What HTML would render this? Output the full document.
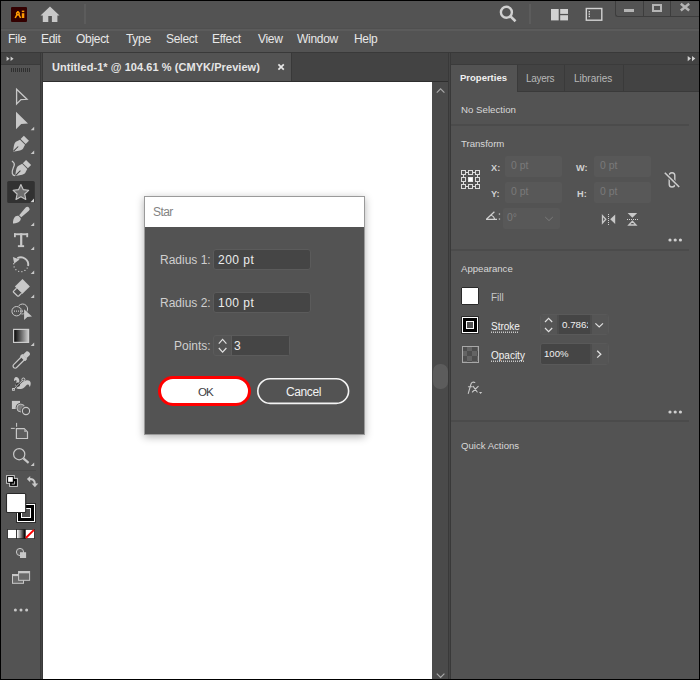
<!DOCTYPE html>
<html><head><meta charset="utf-8">
<style>
*{margin:0;padding:0;box-sizing:border-box}
html,body{width:700px;height:680px;overflow:hidden;background:#000}
body{position:relative;font-family:"Liberation Sans",sans-serif;color:#e8e8e8}
.a{position:absolute}
.t{position:absolute;white-space:nowrap;line-height:1}
svg{position:absolute;overflow:visible}
</style></head><body>
<!-- main window area -->
<div class="a" style="left:1px;top:1px;width:698px;height:678px;background:#535353"></div>
<!-- title bar subtle line -->
<div class="a" style="left:1px;top:28px;width:698px;height:1px;background:#4f4f4f"></div><div class="a" style="left:1px;top:29px;width:698px;height:2px;background:#5b5b5b"></div>
<!-- dark line under menu -->
<div class="a" style="left:1px;top:52px;width:698px;height:1px;background:#393939"></div>

<!-- ===== TITLE BAR ===== -->
<div class="a" style="left:11px;top:7px;width:16px;height:15px;background:#330000;border-radius:1px"></div>
<svg style="left:0;top:0" width="40" height="30"><g fill="none" stroke="#ff9a00" stroke-width="1.6"><path d="M15.2 18 L17 14.5 M20.6 18 L18.8 14.5"/><circle cx="17.9" cy="13.6" r="1.3"/><path d="M17.9 11 V12.2"/></g><rect x="21.8" y="10.6" width="2.5" height="1.5" fill="#ff9a00"/><rect x="21.8" y="13.2" width="2.5" height="4.8" fill="#ff9a00"/></svg>
<svg style="left:0;top:0" width="90" height="30"><path d="M50 6.4 L59.5 15.6 H57.4 V22.1 H51.9 V16.1 H48.3 V22.1 H42.8 V15.6 H40.5 Z" fill="#c8c8c8"/></svg>
<div class="a" style="left:84px;top:4px;width:2px;height:20px;background:#5c5c5c"></div>
<svg style="left:0;top:0" width="620" height="30"><circle cx="506.4" cy="12.2" r="5.5" fill="none" stroke="#d0d0d0" stroke-width="2.4"/><path d="M510.5 16.4 L515.5 21.3" stroke="#d0d0d0" stroke-width="2.6"/></svg>
<div class="a" style="left:529px;top:4px;width:2px;height:20px;background:#5c5c5c"></div>
<svg style="left:0;top:0" width="620" height="30"><g fill="#d2d2d2"><rect x="551" y="9" width="7.7" height="11.4"/><rect x="560.2" y="9" width="7.8" height="4.9"/><rect x="560.2" y="15.2" width="7.8" height="5.2"/></g>
<rect x="586.3" y="8.5" width="15.5" height="11.7" fill="none" stroke="#d2d2d2" stroke-width="1.4"/><g fill="#d2d2d2"><rect x="588.6" y="11" width="1.4" height="1.4"/><rect x="588.6" y="13.4" width="1.4" height="1.4"/><rect x="588.6" y="15.8" width="1.4" height="1.4"/></g></svg>
<div class="a" style="left:615px;top:1px;width:84px;height:16px;border:1px solid #3d3d3d;border-top:none;border-right:none;border-bottom-left-radius:3px;background:#535353"></div>
<div class="a" style="left:643px;top:1px;width:1px;height:15px;background:#3d3d3d"></div>
<div class="a" style="left:670px;top:1px;width:1px;height:15px;background:#3d3d3d"></div>
<div class="a" style="left:624px;top:9px;width:10px;height:3px;background:#b4b4b4"></div>
<div class="a" style="left:652px;top:4px;width:10px;height:8px;border:2px solid #b4b4b4"></div>
<svg style="left:0;top:0" width="700" height="30"><path d="M680.8 3.8 L689.2 10.4 M689.2 3.8 L680.8 10.4" stroke="#b4b4b4" stroke-width="2.5"/></svg>

<!-- ===== MENU ===== -->
<div class="t" style="left:8px;top:33px;font-size:12px;letter-spacing:-0.3px">File</div>
<div class="t" style="left:41px;top:33px;font-size:12px;letter-spacing:-0.3px">Edit</div>
<div class="t" style="left:76px;top:33px;font-size:12px;letter-spacing:-0.3px">Object</div>
<div class="t" style="left:126px;top:33px;font-size:12px;letter-spacing:-0.3px">Type</div>
<div class="t" style="left:166px;top:33px;font-size:12px;letter-spacing:-0.3px">Select</div>
<div class="t" style="left:212px;top:33px;font-size:12px;letter-spacing:-0.3px">Effect</div>
<div class="t" style="left:258px;top:33px;font-size:12px;letter-spacing:-0.3px">View</div>
<div class="t" style="left:297px;top:33px;font-size:12px;letter-spacing:-0.3px">Window</div>
<div class="t" style="left:354px;top:33px;font-size:12px;letter-spacing:-0.3px">Help</div>

<!-- ===== TOOLBAR ===== -->
<div class="a" style="left:1px;top:53px;width:39px;height:11px;background:#434343"></div>
<div class="a" style="left:1px;top:64px;width:39px;height:1px;background:#3b3b3b"></div>
<div class="a" style="left:40px;top:53px;width:1px;height:626px;background:#393939"></div>
<div class="a" style="left:41px;top:53px;width:1px;height:626px;background:#454545"></div>
<div class="a" style="left:42px;top:53px;width:1px;height:626px;background:#393939"></div>


<!-- toolbar icons -->
<svg style="left:0;top:0" width="43" height="680">
<defs><linearGradient id="g1" x1="0" x2="1"><stop offset="0" stop-color="#000"/><stop offset="1" stop-color="#cfcfcf"/></linearGradient>
<linearGradient id="g2" x1="0" x2="1"><stop offset="0" stop-color="#fff"/><stop offset="1" stop-color="#000"/></linearGradient></defs>
<g fill="#cfcfcf">
<path d="M6.6 56.6 L9.6 58.8 L6.6 61 Z M10.6 56.6 L13.6 58.8 L10.6 61 Z"/>
</g>
<g fill="#2f2f2f"><rect x="11" y="68" width="1" height="4"/><rect x="13" y="68" width="1" height="4"/><rect x="15" y="68" width="1" height="4"/><rect x="17" y="68" width="1" height="4"/><rect x="19" y="68" width="1" height="4"/><rect x="21" y="68" width="1" height="4"/><rect x="23" y="68" width="1" height="4"/><rect x="25" y="68" width="1" height="4"/><rect x="27" y="68" width="1" height="4"/><rect x="29" y="68" width="1" height="4"/></g>
<!-- selection -->
<path d="M16.6 89.3 L27 99.3 L21 99.6 L16.6 103.9 Z" fill="none" stroke="#c8c8c8" stroke-width="1.3" stroke-linejoin="miter"/>
<!-- direct selection -->
<path d="M16 111.8 L28 123.6 L21.2 124 L16 129.3 Z" fill="#c8c8c8"/>
<!-- corner triangles -->
<g fill="#c8c8c8">
<path d="M34.2 126.7 V130.2 H30.7 Z"/>
<path d="M34.2 150.6 V154.1 H30.7 Z"/>
<path d="M34.2 222.4 V225.9 H30.7 Z"/>
<path d="M34.2 246.5 V250 H30.7 Z"/>
<path d="M34.2 270.4 V273.9 H30.7 Z"/>
<path d="M34.2 294.5 V298 H30.7 Z"/>
<path d="M34.2 342.4 V345.9 H30.7 Z"/>
<path d="M34.2 462.4 V465.9 H30.7 Z"/>
</g>
<!-- pen -->
<g transform="translate(13.1 151.6) rotate(45)" fill="#c8c8c8">
<path d="M0 0 C-2.2 -3 -5.2 -6 -5 -9 L-3.6 -13.3 H3.6 L5 -9 C5.2 -6 2.2 -3 0 0 Z"/>
<rect x="-3.6" y="-18.8" width="7.2" height="4.6"/>
<path d="M0 -0.6 V-7.2" stroke="#3e3e3e" stroke-width="1"/>
</g>
<!-- curvature pen -->
<g transform="translate(15.3 175.8) rotate(45)" fill="#c8c8c8">
<path d="M0 0 C-2.2 -3 -5.2 -6 -5 -9 L-3.6 -13.3 H3.6 L5 -9 C5.2 -6 2.2 -3 0 0 Z"/>
<rect x="-3.6" y="-18.8" width="7.2" height="4.6"/>
<path d="M0 -0.6 V-7.2" stroke="#3e3e3e" stroke-width="1"/>
</g>
<path d="M11.9 161 C13.5 162 15 163 14.2 165.5 C13.4 168 11.5 171 12.3 173.5 C12.8 175 14 175.6 15 175.6" fill="none" stroke="#c8c8c8" stroke-width="1.2"/>
<!-- star tool box -->
<rect x="7.2" y="181" width="27.6" height="22" rx="1.6" fill="#323232"/>
<path d="M34 198.6 V202.2 H30.4 Z" fill="#d0d0d0"/>
<path d="M20.9 184.6 L23.2 189.6 L28.7 190.3 L24.7 194 L25.8 199.4 L20.9 196.7 L16 199.4 L17.1 194 L13.1 190.3 L18.6 189.6 Z" fill="#6e6e6e" stroke="#c4c4c4" stroke-width="1.1" stroke-linejoin="round"/>
<!-- brush -->
<g transform="translate(13 223.4) rotate(45)" fill="#c8c8c8">
<path d="M0 0 C-1.8 -1.6 -3.6 -4.2 -3.2 -6.8 C-3 -8 -2.2 -9 -1.5 -9.2 H1.5 C2.2 -9 3 -8 3.2 -6.8 C3.6 -4.2 1.8 -1.6 0 0 Z"/>
<path d="M-1.5 -10.2 L-2.3 -20.2 A2.3 2.3 0 0 1 2.3 -20.2 L1.5 -10.2 Z"/>
</g>
<!-- T -->
<g fill="#c8c8c8"><rect x="14" y="233.3" width="14.1" height="1.9"/><rect x="14" y="233.3" width="1.8" height="3.9"/><rect x="26.3" y="233.3" width="1.8" height="3.9"/><rect x="20.1" y="233.3" width="2.2" height="13.6"/><rect x="17.9" y="245.2" width="6.2" height="1.9"/></g>
<!-- rotate -->
<path d="M17.3 258.3 A7.3 7.3 0 0 1 28.1 266" fill="none" stroke="#c8c8c8" stroke-width="1.9"/>
<path d="M12.9 256.9 L19.6 259.6 L14.2 263.4 Z" fill="#c8c8c8"/>
<g fill="#d0d0d0"><circle cx="27.14" cy="268.10" r="0.65"/><circle cx="24.93" cy="270.47" r="0.65"/><circle cx="21.90" cy="271.63" r="0.65"/><circle cx="18.68" cy="271.35" r="0.65"/><circle cx="15.90" cy="269.68" r="0.65"/><circle cx="14.13" cy="266.96" r="0.65"/><circle cx="13.74" cy="263.75" r="0.65"/></g>
<!-- eraser -->
<path d="M22.5 279 L29.9 286.6 L22.2 294.1 L14.9 286.6 Z" fill="#c8c8c8"/>
<path d="M16.6 288.2 L13.6 291.1 Q13 291.7 13.6 292.3 L17.5 296 Q18.1 296.5 18.7 296 L21.6 293.1" fill="#505050" stroke="#c8c8c8" stroke-width="1.2" stroke-linejoin="round"/>
<!-- shape builder -->
<circle cx="22.6" cy="309" r="5" fill="none" stroke="#c8c8c8" stroke-width="1"/>
<circle cx="16.6" cy="311.2" r="5.6" fill="#535353"/>
<circle cx="16.6" cy="311.2" r="4.7" fill="none" stroke="#c8c8c8" stroke-width="1"/>
<path d="M20.4 307.6 A4.6 4.6 0 0 1 20.4 314.8" fill="none" stroke="#8a8a8a" stroke-width="0.8"/>
<g fill="#e0e0e0"><rect x="14" y="310.6" width="1" height="1"/><rect x="16" y="310.6" width="1" height="1"/><rect x="18" y="310.6" width="1" height="1"/><rect x="20" y="310.6" width="1" height="1"/><rect x="22" y="310.6" width="1" height="1"/></g>
<path d="M24.1 309.2 L32 316.6 L27.3 316.9 L24.1 320.1 Z" fill="#c8c8c8" stroke="#535353" stroke-width="0.8" paint-order="stroke"/>
<!-- gradient -->
<rect x="13.6" y="329.4" width="15" height="13" fill="url(#g1)" stroke="#cdcdcd" stroke-width="1.2"/>
<!-- eyedropper -->
<g transform="translate(13.8 367.4) rotate(45)" fill="#c8c8c8">
<path d="M-2.1 -12.6 V-1.9 A2.1 2.1 0 0 0 2.1 -1.9 V-12.6" fill="#4a4a4a" stroke="#c8c8c8" stroke-width="1.2"/>
<rect x="-3.6" y="-15.6" width="7.2" height="3.4" rx="0.6"/>
<path d="M-2.5 -15.4 V-19.8 C-2.5 -21 -1.4 -21.6 0 -21.6 C1.4 -21.6 2.5 -21 2.5 -19.8 V-15.4 Z"/>
</g>
<!-- puppet warp -->
<path d="M14.2 381 C13.6 378.8 14.8 377 16.4 377.1 C18.4 377.2 19.4 379.2 19.4 381.6 L19.6 383 C21.8 382.8 23.6 381.4 25.6 380.6 C27.6 379.8 30 380.2 30.6 382.6 C30.9 384 30.4 386 29.8 387.2 C29.4 385.8 29 384.6 28 384.4 C26.8 384.2 25.8 386 24.2 387.4 C22.4 389 19.8 389.4 17.6 388.8 C15.6 388.2 15 386.6 15.6 384.8 C16.1 383.2 16.9 381.6 16.4 380.4 C16.1 379.7 15.5 379.8 15.2 380.4 C15 380.8 14.8 381.2 14.2 381 Z" fill="#c8c8c8"/>
<path d="M13.6 389.4 L23.2 379.6" stroke="#535353" stroke-width="2.2"/>
<path d="M13.8 389.2 L23 379.8" stroke="#c8c8c8" stroke-width="0.9"/>
<circle cx="17.9" cy="384.7" r="2.1" fill="#3a3a3a"/>
<path d="M16.5 386.1 L19.3 383.3" stroke="#c8c8c8" stroke-width="0.9"/>
<circle cx="23.4" cy="379.5" r="1.5" fill="#535353" stroke="#d0d0d0" stroke-width="1"/>
<rect x="12.1" y="388" width="2.7" height="2.8" fill="#c8c8c8"/><rect x="13.1" y="389" width="0.8" height="0.8" fill="#535353"/>
<!-- live paint -->
<rect x="11.9" y="400.9" width="8.1" height="8.1" fill="#c8c8c8"/>
<circle cx="20.8" cy="408" r="5.2" fill="#535353"/>
<circle cx="20.8" cy="408" r="3.9" fill="#7c7c7c" stroke="#c8c8c8" stroke-width="0.9"/>
<circle cx="26" cy="411" r="5.2" fill="#535353"/>
<circle cx="26" cy="411" r="3.6" fill="#535353" stroke="#c8c8c8" stroke-width="1.1"/>
<!-- artboard -->
<path d="M16.6 422.9 V426.8 M10.9 428.4 H14.8" stroke="#c8c8c8" stroke-width="1"/>
<path d="M16.4 428.7 H24.2 L27.5 432 V438.5 H16.4 Z" fill="#5e5e5e" stroke="#c8c8c8" stroke-width="1.2"/>
<path d="M24.2 428.7 L27.5 432 H24.2 Z" fill="#a8a8a8"/>
<!-- zoom -->
<circle cx="19.2" cy="454.2" r="5.6" fill="none" stroke="#c8c8c8" stroke-width="1.2"/>
<path d="M23.4 458.4 L28.6 462.8" stroke="#c8c8c8" stroke-width="2.2"/>
<!-- separator -->
<rect x="6" y="470" width="30" height="1" fill="#4b4b4b"/>
<!-- default fill stroke -->
<rect x="9.1" y="477.9" width="8.8" height="9" fill="#c8c8c8"/>
<rect x="6.1" y="475.1" width="8.7" height="8.7" fill="#c8c8c8"/>
<rect x="10.1" y="478.9" width="6.8" height="7" fill="#000"/>
<rect x="7.1" y="476.1" width="6.7" height="6.7" fill="#000"/>
<rect x="8.1" y="477.1" width="4.7" height="4.7" fill="#fff"/>
<path d="M11.6 484.1 H14.6 V481.2" fill="none" stroke="#c8c8c8" stroke-width="0.9"/>
<!-- swap -->
<path d="M29 479.1 C32.4 478.9 34.9 479.8 34.9 484.2" fill="none" stroke="#c8c8c8" stroke-width="2"/>
<path d="M26.9 479.1 L30.2 475.9 L30.2 482.3 Z M31.6 483.4 H38.2 L34.9 487.3 Z" fill="#c8c8c8"/>
<!-- stroke box -->
<g shape-rendering="crispEdges">
<rect x="16.5" y="503.5" width="19" height="19" fill="#000" stroke="#2b2b2b" stroke-width="1"/>
<rect x="17.5" y="504.5" width="17" height="17" fill="none" stroke="#fff" stroke-width="1"/>
<rect x="21.5" y="508.5" width="9" height="9" fill="#535353" stroke="#fff" stroke-width="1"/>
</g>
<!-- fill box -->
<rect x="6.5" y="493.5" width="19.2" height="19" rx="1" fill="#fff" stroke="#2a2a2a" stroke-width="1.1"/>
<!-- color buttons -->
<rect x="7" y="529" width="28" height="10" rx="1" fill="#252525"/>
<rect x="7.9" y="529.8" width="8.2" height="8.4" fill="#fff"/>
<rect x="17" y="529.8" width="8" height="8.4" fill="url(#g2)"/>
<rect x="25.8" y="529.8" width="8.3" height="8.4" fill="#fff"/>
<path d="M25.8 538 L34 529.9" stroke="#ff0000" stroke-width="1.9"/>
<!-- draw mode -->
<circle cx="20" cy="552" r="3.6" fill="#606060" stroke="#c8c8c8" stroke-width="1"/>
<rect x="20" y="552.2" width="6.1" height="5.8" fill="#c8c8c8"/>
<!-- screen mode -->
<rect x="12.5" y="574.5" width="11" height="8.8" fill="#6a6a6a" stroke="#c8c8c8" stroke-width="1"/>
<rect x="12.5" y="574.5" width="11" height="1.6" fill="#c8c8c8"/>
<rect x="18.6" y="571.5" width="11" height="8.8" fill="#6a6a6a" stroke="#c8c8c8" stroke-width="1"/>
<rect x="18.6" y="571.5" width="11" height="1.8" fill="#c8c8c8"/>
<!-- dots -->
<g fill="#c8c8c8"><circle cx="15.4" cy="610" r="1.5"/><circle cx="21" cy="610" r="1.5"/><circle cx="26.6" cy="610" r="1.5"/></g>
</svg>

<!-- ===== DOC AREA ===== -->
<div class="a" style="left:43px;top:53px;width:405px;height:28px;background:#434343"></div>
<div class="a" style="left:43px;top:53px;width:248px;height:28px;background:#535353"></div>
<div class="a" style="left:291px;top:53px;width:1px;height:28px;background:#393939"></div>
<div class="a" style="left:43px;top:81px;width:405px;height:1px;background:#2e2e2e"></div>
<div class="a" style="left:43px;top:82px;width:389px;height:597px;background:#ffffff"></div>
<div class="a" style="left:432px;top:82px;width:16px;height:597px;background:#4a4a4a"></div>
<div class="a" style="left:433px;top:364px;width:15px;height:25px;border-radius:7px;background:#5c5c5c"></div>
<div class="a" style="left:448px;top:53px;width:1px;height:626px;background:#393939"></div>
<div class="a" style="left:449px;top:53px;width:1px;height:626px;background:#454545"></div>
<div class="a" style="left:450px;top:53px;width:1px;height:626px;background:#393939"></div>


<!-- doc tab text -->
<div class="t" style="left:52px;top:62px;font-size:11px;font-weight:bold;color:#e6e6e6;letter-spacing:0.06px">Untitled-1* @ 104.61 % (CMYK/Preview)</div>
<svg style="left:0;top:0" width="300" height="80"><path d="M278.4 64.3 L283.8 69.7 M283.8 64.3 L278.4 69.7" stroke="#e8e8e8" stroke-width="1.7"/></svg>
<svg style="left:0;top:0" width="450" height="680"><path d="M436.8 92.6 L440.6 88.8 L444.4 92.6" fill="none" stroke="#a8a8a8" stroke-width="1.2"/><path d="M436.8 673.6 L440.6 677.4 L444.4 673.6" fill="none" stroke="#a8a8a8" stroke-width="1.2"/></svg>

<!-- ===== DIALOG ===== -->
<div class="a" style="left:144px;top:196px;width:221px;height:239px;background:#535353;border:1px solid #9a9a9a;box-shadow:0 2px 8px rgba(0,0,0,0.3)"></div>
<div class="a" style="left:145px;top:197px;width:219px;height:30px;background:#ffffff"></div>
<div class="t" style="left:153px;top:206px;font-size:12px;color:#838383;letter-spacing:-0.6px">Star</div>
<div class="t" style="left:160px;top:254px;font-size:12px;color:#cfcfcf">Radius 1:</div>
<div class="a" style="left:213px;top:249px;width:98px;height:21px;background:#454545;border:1px solid #5b5b5b;border-radius:3px"></div>
<div class="t" style="left:218px;top:254px;font-size:12px;color:#ececec;letter-spacing:0.5px">200 pt</div>
<div class="t" style="left:160px;top:297px;font-size:12px;color:#cfcfcf">Radius 2:</div>
<div class="a" style="left:213px;top:292px;width:98px;height:21px;background:#454545;border:1px solid #5b5b5b;border-radius:3px"></div>
<div class="t" style="left:218px;top:297px;font-size:12px;color:#ececec;letter-spacing:0.5px">100 pt</div>
<div class="t" style="left:174px;top:340px;font-size:12px;color:#cfcfcf">Points:</div>
<div class="a" style="left:213px;top:335px;width:77px;height:21px;background:#535353;border:1px solid #5b5b5b;border-radius:3px"></div>
<div class="a" style="left:231px;top:336px;width:58px;height:19px;background:#454545;border-left:1px solid #5b5b5b"></div>
<svg style="left:0;top:0" width="400" height="450"><path d="M218.8 343.6 L222.6 339.4 L226.4 343.6 M218.8 348 L222.6 352.2 L226.4 348" fill="none" stroke="#e0e0e0" stroke-width="1.2"/></svg>
<div class="t" style="left:234px;top:340px;font-size:12px;color:#ececec">3</div>
<div class="a" style="left:158px;top:376px;width:93px;height:30px;border-radius:15px;background:#ffffff;border:3px solid #ff0000"></div>
<div class="t" style="left:198px;top:386px;font-size:11.6px;color:#404040;letter-spacing:-1px">OK</div>
<svg style="left:0;top:0" width="400" height="450"><rect x="257.8" y="378.7" width="90.8" height="24.7" rx="12.35" fill="#535353" stroke="#f4f4f4" stroke-width="1.6"/></svg>
<div class="t" style="left:286px;top:386px;font-size:12px;color:#f2f2f2;letter-spacing:-0.4px">Cancel</div>

<!-- ===== RIGHT PANEL ===== -->
<div class="a" style="left:451px;top:53px;width:248px;height:11px;background:#434343"></div>
<div class="a" style="left:451px;top:64px;width:248px;height:1px;background:#3b3b3b"></div>
<div class="a" style="left:517px;top:65px;width:182px;height:26px;background:#434343"></div>


<div class="a" style="left:517px;top:65px;width:1px;height:26px;background:#3a3a3a"></div>
<div class="a" style="left:564px;top:65px;width:1px;height:26px;background:#3a3a3a"></div>
<div class="a" style="left:623px;top:65px;width:1px;height:26px;background:#3a3a3a"></div>
<div class="a" style="left:517px;top:91px;width:182px;height:1px;background:#3a3a3a"></div>
<svg style="left:0;top:0" width="700" height="70"><path d="M687.7 56 L691 58.6 L687.7 61.2 Z M692 56 L695.3 58.6 L692 61.2 Z" fill="#d0d0d0"/></svg>
<div class="t" style="left:460px;top:73px;font-size:9.5px;font-weight:bold;color:#f0f0f0">Properties</div>
<div class="t" style="left:526px;top:74px;font-size:10px;color:#b8b8b8;letter-spacing:-0.3px">Layers</div>
<div class="t" style="left:574px;top:74px;font-size:10px;color:#b8b8b8">Libraries</div>
<div class="t" style="left:461px;top:105px;font-size:9.7px;color:#d8d8d8">No Selection</div>
<div class="a" style="left:451px;top:124px;width:238px;height:2px;background:#4b4b4b"></div>
<div class="t" style="left:461px;top:139px;font-size:9.6px;color:#d8d8d8">Transform</div>
<svg style="left:0;top:0" width="700" height="260">
<g fill="none" stroke="#dcdcdc" stroke-width="1" shape-rendering="crispEdges">
<path d="M466 172.5 H468 M473 172.5 H475 M466 186.5 H468 M473 186.5 H475 M463.5 175 V177 M463.5 182 V184 M477.5 175 V177 M477.5 182 V184"/>
<rect x="461.5" y="170.5" width="4" height="4"/><rect x="468.5" y="170.5" width="4" height="4"/><rect x="475.5" y="170.5" width="4" height="4"/>
<rect x="461.5" y="177.5" width="4" height="4"/><rect x="475.5" y="177.5" width="4" height="4"/>
<rect x="461.5" y="184.5" width="4" height="4"/><rect x="468.5" y="184.5" width="4" height="4"/><rect x="475.5" y="184.5" width="4" height="4"/>
</g>
<rect x="468" y="177" width="5" height="5" fill="#e8e8e8" shape-rendering="crispEdges"/><rect x="469" y="178" width="3" height="3" fill="#ffffff" shape-rendering="crispEdges"/>
<path d="M486.4 219.3 L494.4 211.8 M486 219.4 H497 M491 215 C493 215.8 494.4 217.4 494.8 219.3" fill="none" stroke="#d0d0d0" stroke-width="1.2"/>
<rect x="498.8" y="213.4" width="1.3" height="1.3" fill="#c0c0c0"/><rect x="498.8" y="218.4" width="1.3" height="1.3" fill="#c0c0c0"/>

<path d="M669.2 175.6 C669.2 171.8 674.8 171.8 674.8 175.6 V184.2 C674.8 188 669.2 188 669.2 184.2 Z" fill="none" stroke="#cdcdcd" stroke-width="1.4"/>
<path d="M664.8 172.8 L679.2 187" stroke="#535353" stroke-width="3.6"/>
<path d="M664.8 172.8 L679.2 187" stroke="#cdcdcd" stroke-width="1.6"/>
<path d="M602.5 215.6 L605.8 219.3 L602.5 223 Z" fill="none" stroke="#c8c8c8" stroke-width="1.3"/>
<path d="M615.2 214.6 V224 L610.2 219.3 Z" fill="#c8c8c8"/>
<g fill="#d0d0d0" shape-rendering="crispEdges"><rect x="608" y="214" width="1" height="1"/><rect x="608" y="216" width="1" height="1"/><rect x="608" y="218" width="1" height="1"/><rect x="608" y="220" width="1" height="1"/><rect x="608" y="222" width="1" height="1"/><rect x="608" y="224" width="1" height="1"/><rect x="627" y="219" width="1" height="1"/><rect x="629" y="219" width="1" height="1"/><rect x="631" y="219" width="1" height="1"/><rect x="633" y="219" width="1" height="1"/><rect x="635" y="219" width="1" height="1"/><rect x="637" y="219" width="1" height="1"/></g>
<path d="M627.6 212.9 H637.2 L632.4 217.8 Z" fill="#c8c8c8"/>
<path d="M628.8 225 H636 L632.4 221.3 Z" fill="none" stroke="#c8c8c8" stroke-width="1.3"/>
<g fill="#cfcfcf"><circle cx="670" cy="240" r="1.6"/><circle cx="675.2" cy="240" r="1.6"/><circle cx="680.4" cy="240" r="1.6"/></g>
</svg>
<div class="t" style="left:491px;top:164px;font-size:9.2px;font-weight:bold;color:#d0d0d0">X:</div>
<div class="a" style="left:505px;top:156px;width:57px;height:21px;background:#585858;border-radius:2px"></div>
<div class="t" style="left:511px;top:161px;font-size:10.4px;color:#7a7a7a">0 pt</div>
<div class="t" style="left:491px;top:190px;font-size:9.2px;font-weight:bold;color:#d0d0d0">Y:</div>
<div class="a" style="left:505px;top:182px;width:57px;height:21px;background:#585858;border-radius:2px"></div>
<div class="t" style="left:511px;top:187px;font-size:10.4px;color:#7a7a7a">0 pt</div>
<div class="a" style="left:503px;top:208px;width:57px;height:21px;background:#585858;border-radius:2px"></div>
<div class="t" style="left:507px;top:213px;font-size:10.4px;color:#7a7a7a">0°</div>
<div class="t" style="left:576px;top:164px;font-size:9.2px;font-weight:bold;color:#d0d0d0">W:</div>
<div class="a" style="left:594px;top:156px;width:57px;height:21px;background:#585858;border-radius:2px"></div>
<div class="t" style="left:600px;top:161px;font-size:10.4px;color:#7a7a7a">0 pt</div>
<div class="t" style="left:577px;top:190px;font-size:9.2px;font-weight:bold;color:#d0d0d0">H:</div>
<div class="a" style="left:594px;top:182px;width:57px;height:21px;background:#585858;border-radius:2px"></div>
<div class="t" style="left:600px;top:187px;font-size:10.4px;color:#7a7a7a">0 pt</div>
<div class="a" style="left:451px;top:249px;width:238px;height:2px;background:#4b4b4b"></div>

<div class="t" style="left:461px;top:264px;font-size:9.6px;color:#d8d8d8">Appearance</div>
<div class="a" style="left:461px;top:287px;width:18px;height:18px;background:#fff;border:1px solid #2a2a2a;border-radius:1px"></div>
<div class="t" style="left:491px;top:293px;font-size:10px;color:#c8c8c8">Fill</div>
<div class="a" style="left:461px;top:316px;width:18px;height:18px;background:#000;border:1px solid #2a2a2a;border-radius:1px"></div>
<div class="a" style="left:462px;top:317px;width:16px;height:16px;border:1px solid #fff"></div>
<div class="a" style="left:466px;top:321px;width:8px;height:8px;border:1px solid #fff;background:#535353"></div>
<div class="t" style="left:491px;top:322px;font-size:10px;color:#f4f4f4">Stroke</div>
<svg style="left:0;top:0" width="700" height="370"><path d="M491 332.2 H519" stroke="#c8c8c8" stroke-width="1.4" stroke-dasharray="1 1"/><path d="M491 361.2 H524" stroke="#c8c8c8" stroke-width="1.4" stroke-dasharray="1 1"/></svg>
<div class="a" style="left:462px;top:346px;width:17px;height:17px;border:1px solid #a8a8a8;background:repeating-conic-gradient(#646464 0 25%, #4e4e4e 0 50%) -1px -1px/10px 10px"></div>
<div class="t" style="left:491px;top:351px;font-size:10px;color:#f4f4f4">Opacity</div>

<div class="a" style="left:540px;top:314px;width:69px;height:21px;border:1px solid #595959;border-radius:3px;background:#4d4d4d"></div>
<div class="a" style="left:541px;top:315px;width:16px;height:19px;background:#555555;border-radius:2px 0 0 2px"></div>
<div class="a" style="left:559px;top:315px;width:31px;height:19px;background:#454545"></div>
<div class="a" style="left:592px;top:315px;width:16px;height:19px;background:#555555;border-radius:0 2px 2px 0"></div>

<div class="a" style="left:559px;top:316px;width:29px;height:18px;overflow:hidden"><div class="t" style="left:3px;top:4px;font-size:9.8px;color:#f0f0f0">0.7862</div></div>
<div class="a" style="left:540px;top:343px;width:69px;height:22px;border:1px solid #595959;border-radius:3px;background:#4d4d4d"></div>
<div class="a" style="left:541px;top:344px;width:49px;height:20px;background:#454545;border-radius:2px 0 0 2px"></div>
<div class="a" style="left:592px;top:344px;width:16px;height:20px;background:#555555;border-radius:0 2px 2px 0"></div>
<div class="t" style="left:544px;top:349px;font-size:9.6px;color:#f0f0f0">100%</div>

<svg style="left:0;top:0" width="700" height="430"><g fill="none" stroke="#c8c8c8" stroke-width="1.1" stroke-linecap="round"><path d="M474.8 382.5 C473.4 381.8 471.6 382.2 471 384 L468.3 393.4"/><path d="M468.4 386.7 H472.2"/><path d="M473.2 386.4 L477.2 392 M478.2 386.4 L472.4 392"/></g></svg>
<svg style="left:0;top:0" width="700" height="430"><path d="M479 392.1 H482.2 L480.6 394 Z" fill="#c8c8c8"/><g fill="#cfcfcf"><circle cx="670" cy="412" r="1.6"/><circle cx="675.2" cy="412" r="1.6"/><circle cx="680.4" cy="412" r="1.6"/></g></svg>
<div class="a" style="left:451px;top:420px;width:238px;height:2px;background:#4b4b4b"></div>
<div class="t" style="left:461px;top:441px;font-size:9.6px;color:#d8d8d8">Quick Actions</div>


<svg style="left:0;top:0" width="700" height="370"><path d="M545 221.2 L549 217.2" fill="none"/><path d="M545.2 217 L549 220.6 L552.8 217" fill="none" stroke="#7a7a7a" stroke-width="1"/>
<path d="M545 322 L548.6 318.4 L552.2 322 M545 328 L548.6 331.6 L552.2 328" fill="none" stroke="#e0e0e0" stroke-width="1.2"/><path d="M595.4 323.4 L599.2 327 L603 323.4" fill="none" stroke="#e0e0e0" stroke-width="1.2"/><path d="M597.2 350.8 L600.8 354.2 L597.2 357.6" fill="none" stroke="#e0e0e0" stroke-width="1.3"/></svg>
</body></html>
